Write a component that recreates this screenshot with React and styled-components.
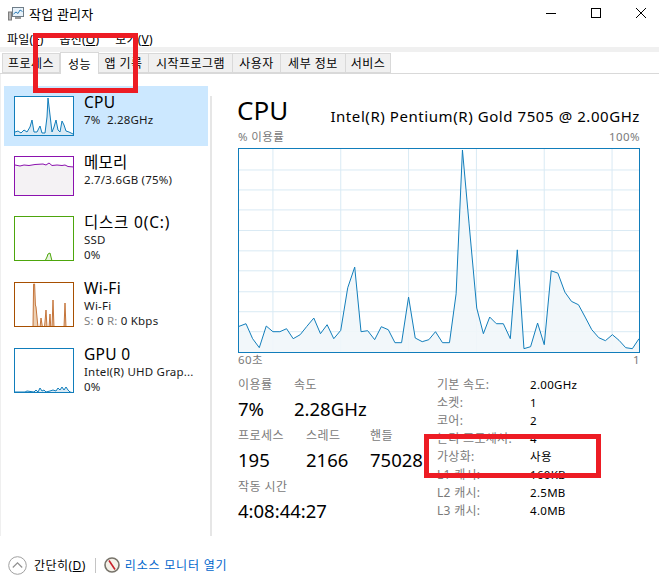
import React from "react";
import styled, { createGlobalStyle } from "styled-components";

const GlobalStyle = createGlobalStyle`
  html, body { margin: 0; padding: 0; background: #fff; }
  body { font-family: "Noto Sans", "Noto Sans CJK KR", sans-serif; color: #000; }
  * { box-sizing: border-box; }
`;

const tabs = ["프로세스", "성능", "앱 기록", "시작프로그램", "사용자", "세부 정보", "서비스"];
const tabWidths = [58, 39, 50, 84, 48, 65, 45];

const cpuPoints =
  "25,708 46,700 66,745 86,772 107,707 127,724 148,724 168,715 188,745 209,733 229,708 250,683 270,730 290,703 310,745 331,720 352,592 373,530 392,724 412,721 433,748 453,709 474,718 494,757 514,757 535,620 555,743 576,754 596,748 616,724 637,757 658,757 678,610 697,178 717,400 740,653 760,730 779,680 799,700 820,700 841,745 862,478 882,775 902,769 923,698 943,763 964,541 984,548 1005,605 1025,633 1046,643 1066,680 1086,718 1107,742 1127,751 1148,733 1168,750 1188,772 1208,775 1228,745";
const gridX = [127, 331, 535, 739, 943, 1147];
const gridY = [238, 298, 358, 420, 481, 541, 604, 664, 724];

const sideItems = [
  {
    key: "cpu",
    title: "CPU",
    lines: ["7%  2.28GHz"],
    color: "#117dbb",
    fill: "#d9eaf5",
    h: 40,
    selected: true,
    points:
      "0,35 3,34 6,36 9,33 12,35 15,30 17,23 19,35 22,35 25,29 27,36 30,36 32,20 33,1 35,18 37,35 39,30 41,23 43,33 45,35 47,24 49,28 51,34 54,35 58,37",
  },
  {
    key: "mem",
    title: "메모리",
    lines: ["2.7/3.6GB (75%)"],
    color: "#8b12ae",
    fill: "#f4f2f4",
    h: 40,
    points:
      "0,8 5,9 9,8 14,8.5 20,7.5 28,7 31,8 34,6 37,8.5 42,8 47,8.5 50,8 53,9.5 59,10",
  },
  {
    key: "disk",
    title: "디스크 0(C:)",
    lines: ["SSD", "0%"],
    color: "#4da60c",
    fill: "#e6f2dc",
    h: 45,
    points:
      "0,44 16,44 17,43 18,44 30,44 32,40 33,37 35,36 36,40 37,44 45,44 46,43 47,44 59,44",
  },
  {
    key: "wifi",
    title: "Wi-Fi",
    lines: ["Wi-Fi"],
    status: true,
    color: "#a74f01",
    line: "#c4743a",
    fill: "#ecd0b4",
    h: 45,
    points:
      "0,44.5 18,44.5 18.6,1 19.6,1 20.4,22 21,24 23,44.5 25,44.5 26,35 27.5,44.5 29.5,44.5 31,27 32,44.5 34,44.5 35,31 35.8,44.5 37,44.5 38,17 39,44.5 49,44.5 50,20 51,44.5 59,44.5",
  },
  {
    key: "gpu",
    title: "GPU 0",
    lines: ["Intel(R) UHD Grap...", "0%"],
    color: "#117dbb",
    fill: "#d9eaf5",
    h: 45,
    points:
      "0,43 10,43 12,42 19,43 21,41 23,43 25,39 27,42 29,41 31,43 35,42 38,41 41,42 43,39 45,41 47,38 49,41 51,38 53,41 55,43 59,44",
  },
];

const specs = [
  ["기본 속도:", "2.00GHz"],
  ["소켓:", "1"],
  ["코어:", "2"],
  ["논리 프로세서:", "4"],
  ["가상화:", "사용"],
  ["L1 캐시:", "160KB"],
  ["L2 캐시:", "2.5MB"],
  ["L3 캐시:", "4.0MB"],
];

const Window = styled.div`
  position: relative;
  width: 659px;
  height: 588px;
  background: #fff;
  overflow: hidden;
  display: flex;
  flex-direction: column;
`;

const TitleBar = styled.div`
  height: 26px;
  display: flex;
  align-items: center;
  padding: 0 13px 0 8px;
  font-size: 13px;
  letter-spacing: 0.2px;
`;

const TitleText = styled.span`
  margin-left: 5px;
  flex: 1;
`;

const WinControls = styled.div`
  display: flex;
  gap: 35px;
  align-items: center;
`;

const MenuBar = styled.div`
  height: 21px;
  padding: 4px 0 0 7px;
  display: flex;
  gap: 16px;
  align-items: center;
  font-size: 12px;
  letter-spacing: 0.2px;
  u { text-underline-offset: 1px; }
`;

const TabStrip = styled.div`
  height: 27px;
  padding: 5px 0 0 2px;
  background: linear-gradient(#f0f0f0 0, #f0f0f0 5px, #fff 5px);
  border-bottom: 1px solid #d9d9d9;
  display: flex;
  align-items: flex-end;
`;

const Tab = styled.div`
  width: ${(p) => p.$w}px;
  height: ${(p) => (p.$active ? 22 : 20)}px;
  margin-bottom: ${(p) => (p.$active ? -1 : 0)}px;
  background: ${(p) => (p.$active ? "#fff" : "#f0f0f0")};
  border: 1px solid #d9d9d9;
  border-left-width: ${(p) => (p.$first || p.$active ? 1 : 0)}px;
  border-bottom-width: ${(p) => (p.$active ? 0 : 1)}px;
  font-size: 12px;
  letter-spacing: 0.5px;
  display: flex;
  align-items: center;
  justify-content: center;
  white-space: nowrap;
`;

const Main = styled.div`
  height: 462px;
  display: flex;
  border-left: 1px solid #efefef;
`;

const Sidebar = styled.div`
  width: 209px;
  padding: 12px 2px 0 3px;
`;

const SideRule = styled.div`
  width: 2px;
  margin-top: 22px;
  background: #e6e6e6;
`;

const SideItem = styled.div`
  height: ${(p) => p.$h + 20 + (p.$h === 45 ? 1 : 0)}px;
  display: flex;
  padding: 10px 0 0 10px;
  background: ${(p) => (p.$selected ? "#cce8ff" : "transparent")};
`;

const Thumb = styled.svg`
  width: 60px;
  height: ${(p) => p.$h}px;
  background: #fff;
  border: 1px solid ${(p) => p.$color};
  flex: none;
  display: block;
`;

const SideText = styled.div`
  margin-left: 10px;
  margin-top: -4px;
`;

const SideTitle = styled.div`
  font-size: 15.5px;
  line-height: 20px;
  letter-spacing: ${(p) => (p.$wide ? 0.8 : 0.3)}px;
  white-space: pre;
`;

const SideLine = styled.div`
  font-size: 11.5px;
  line-height: 15px;
  letter-spacing: 0.2px;
  white-space: pre;
  color: #1a1a1a;
`;

const Muted = styled.span`
  color: #808080;
`;

const Panel = styled.div`
  flex: 1;
  padding: 17px 19px 0 25px;
  display: flex;
  flex-direction: column;
`;

const PanelHead = styled.div`
  display: flex;
  justify-content: space-between;
  align-items: flex-end;
  height: 37px;
`;

const BigTitle = styled.div`
  font-size: 26px;
  line-height: 36px;
`;

const Model = styled.div`
  font-size: 15px;
  line-height: 24px;
  letter-spacing: 0.57px;
  white-space: nowrap;
`;

const AxisRow = styled.div`
  display: flex;
  justify-content: space-between;
  font-size: 11.5px;
  line-height: 16px;
  color: #7a7a7a;
  letter-spacing: 0.4px;
  padding-left: 1px;
  margin-top: ${(p) => (p.$below ? -1 : 1)}px;
  margin-bottom: ${(p) => (p.$below ? 0 : 3)}px;
`;

const ChartBox = styled.svg`
  display: block;
  margin-left: 1px;
  width: 402px;
  height: 205px;
  border: 1px solid #117dbb;
  background: #fff;
  flex: none;
`;

const Stats = styled.div`
  margin-top: 9px;
  display: flex;
  padding-left: 1px;
`;

const StatsLeft = styled.div`
  width: 199px;
  display: flex;
  flex-direction: column;
  gap: 6px;
`;

const StatRow = styled.div`
  display: flex;
`;

const Stat = styled.div`
  width: ${(p) => (p.$w ? `${p.$w}px` : "auto")};
  white-space: nowrap;
`;

const StatLabel = styled.div`
  font-size: 12px;
  line-height: 16px;
  color: #7a7a7a;
  letter-spacing: 0.45px;
`;

const StatValue = styled.div`
  font-size: 18.5px;
  line-height: 26px;
  margin-top: 3px;
`;

const SpecGrid = styled.div`
  display: grid;
  grid-template-columns: 93px auto;
  grid-auto-rows: 18px;
  align-items: center;
  font-size: 11.5px;
  letter-spacing: 0.3px;
  margin-top: -2px;
`;

const SpecLabel = styled.div`
  font-size: 12px;
  color: #7a7a7a;
  white-space: nowrap;
`;

const Footer = styled.div`
  flex: 1;
  display: flex;
  align-items: center;
  padding: 6px 0 0 8px;
  font-size: 12px;
  letter-spacing: 0.45px;
`;

const FooterDivider = styled.div`
  width: 1px;
  height: 15px;
  background: #c4c4c4;
  margin: 0 8px 0 9px;
`;

const Collapse = styled.span`
  margin-left: 7px;
  u { text-underline-offset: 1px; }
`;

const MonitorLink = styled.span`
  margin-left: 5px;
  color: #0066cc;
  letter-spacing: 0.8px;
`;

const Highlight = styled.div`
  position: absolute;
  left: ${(p) => p.$x}px;
  top: ${(p) => p.$y}px;
  width: ${(p) => p.$w}px;
  height: ${(p) => p.$h}px;
  border: 5px solid #ed1c24;
  pointer-events: none;
`;

const AppIcon = () => (
  <svg width="16" height="16" viewBox="0 0 16 16">
    <rect x="0.5" y="7" width="3" height="8" fill="#b8b8b8" stroke="#7d7d7d" />
    <rect x="4.5" y="2.5" width="11" height="9" fill="#e8f2fa" stroke="#6f7d88" />
    <polyline points="5.5,9 8,7 10,8.5 12,5 14.5,6.5" fill="none" stroke="#2f7fb8" />
    <rect x="7" y="12" width="6" height="2" fill="#9a9a9a" />
  </svg>
);

const Minimize = () => (
  <svg width="10" height="10" viewBox="0 0 10 10">
    <rect x="0" y="5" width="10" height="1" fill="#000" />
  </svg>
);

const Maximize = () => (
  <svg width="10" height="10" viewBox="0 0 10 10">
    <rect x="0.5" y="0.5" width="9" height="9" fill="none" stroke="#000" />
  </svg>
);

const CloseIcon = () => (
  <svg width="10" height="10" viewBox="0 0 10 10">
    <path d="M0 0 L10 10 M10 0 L0 10" stroke="#000" fill="none" />
  </svg>
);

const ChevronCircle = () => (
  <svg width="19" height="19" viewBox="0 0 19 19">
    <circle cx="9.5" cy="9.5" r="8.8" fill="#fff" stroke="#a0a0a0" />
    <path d="M4.8 11.5 L9.5 6.8 L14.2 11.5" fill="none" stroke="#909090" strokeWidth="1.2" />
  </svg>
);

const GaugeIcon = () => (
  <svg width="16" height="16" viewBox="0 0 16 16">
    <circle cx="8" cy="8" r="7" fill="#f4f1e8" stroke="#77736a" strokeWidth="1.6" />
    <path d="M5 3.5 L11 12.5" stroke="#c8202a" strokeWidth="1.6" />
  </svg>
);

const Sparkline = ({ item }) => (
  <Thumb
    $h={item.h}
    $color={item.color}
    viewBox={`0 0 58 ${item.h - 2}`}
    preserveAspectRatio="none"
  >
    <polygon
      points={`0,${item.h} ${item.points} 59,${item.h}`}
      fill={item.fill}
      stroke="none"
    />
    <polyline points={item.points} fill="none" stroke={item.line || item.color} strokeWidth="1" />
  </Thumb>
);

export default function App() {
  return (
    <Window>
      <GlobalStyle />
      <TitleBar>
        <AppIcon />
        <TitleText>작업 관리자</TitleText>
        <WinControls>
          <Minimize />
          <Maximize />
          <CloseIcon />
        </WinControls>
      </TitleBar>
      <MenuBar>
        <span>파일(<u>F</u>)</span>
        <span>옵션(<u>O</u>)</span>
        <span>보기(<u>V</u>)</span>
      </MenuBar>
      <TabStrip>
        {tabs.map((t, i) => (
          <Tab key={t} $w={tabWidths[i]} $active={i === 1} $first={i === 0}>
            {t}
          </Tab>
        ))}
      </TabStrip>
      <Main>
        <Sidebar>
          {sideItems.map((item) => (
            <SideItem key={item.key} $h={item.h} $selected={item.selected}>
              <Sparkline item={item} />
              <SideText>
                <SideTitle $wide={item.key === "disk"}>{item.title}</SideTitle>
                {item.lines.map((l) => (
                  <SideLine key={l}>{l}</SideLine>
                ))}
                {item.status && (
                  <SideLine>
                    <Muted>S:</Muted> 0 <Muted>R:</Muted> 0 Kbps
                  </SideLine>
                )}
              </SideText>
            </SideItem>
          ))}
        </Sidebar>
        <SideRule />
        <Panel>
          <PanelHead>
            <BigTitle>CPU</BigTitle>
            <Model>Intel(R) Pentium(R) Gold 7505 @ 2.00GHz</Model>
          </PanelHead>
          <AxisRow>
            <span>% 이용률</span>
            <span>100%</span>
          </AxisRow>
          <ChartBox viewBox="25 175 1203 610" preserveAspectRatio="none">
            {gridX.map((x) => (
              <line key={x} x1={x} x2={x} y1="175" y2="785" stroke="#d9eaf4" strokeWidth="3" />
            ))}
            {gridY.map((y) => (
              <line key={y} x1="25" x2="1228" y1={y} y2={y} stroke="#d9eaf4" strokeWidth="3" />
            ))}
            <polygon points={`25,785 ${cpuPoints} 1228,785`} fill="#f1f6fa" fillOpacity="0.9" />
            <polyline points={cpuPoints} fill="none" stroke="#117dbb" strokeWidth="3" />
          </ChartBox>
          <AxisRow $below>
            <span>60초</span>
            <span>1</span>
          </AxisRow>
          <Stats>
            <StatsLeft>
              <StatRow>
                <Stat $w={56}>
                  <StatLabel>이용률</StatLabel>
                  <StatValue>7%</StatValue>
                </Stat>
                <Stat>
                  <StatLabel>속도</StatLabel>
                  <StatValue>2.28GHz</StatValue>
                </Stat>
              </StatRow>
              <StatRow>
                <Stat $w={68}>
                  <StatLabel>프로세스</StatLabel>
                  <StatValue>195</StatValue>
                </Stat>
                <Stat $w={64}>
                  <StatLabel>스레드</StatLabel>
                  <StatValue>2166</StatValue>
                </Stat>
                <Stat>
                  <StatLabel>핸들</StatLabel>
                  <StatValue>75028</StatValue>
                </Stat>
              </StatRow>
              <StatRow>
                <Stat>
                  <StatLabel>작동 시간</StatLabel>
                  <StatValue>4:08:44:27</StatValue>
                </Stat>
              </StatRow>
            </StatsLeft>
            <SpecGrid>
              {specs.map(([label, value]) => (
                <React.Fragment key={label}>
                  <SpecLabel>{label}</SpecLabel>
                  <div>{value}</div>
                </React.Fragment>
              ))}
            </SpecGrid>
          </Stats>
        </Panel>
      </Main>
      <Footer>
        <ChevronCircle />
        <Collapse>간단히(<u>D</u>)</Collapse>
        <FooterDivider />
        <GaugeIcon />
        <MonitorLink>리소스 모니터 열기</MonitorLink>
      </Footer>
      <Highlight $x={33} $y={33} $w={105} $h={60} />
      <Highlight $x={424} $y={434} $w={177} $h={44} />
    </Window>
  );
}
